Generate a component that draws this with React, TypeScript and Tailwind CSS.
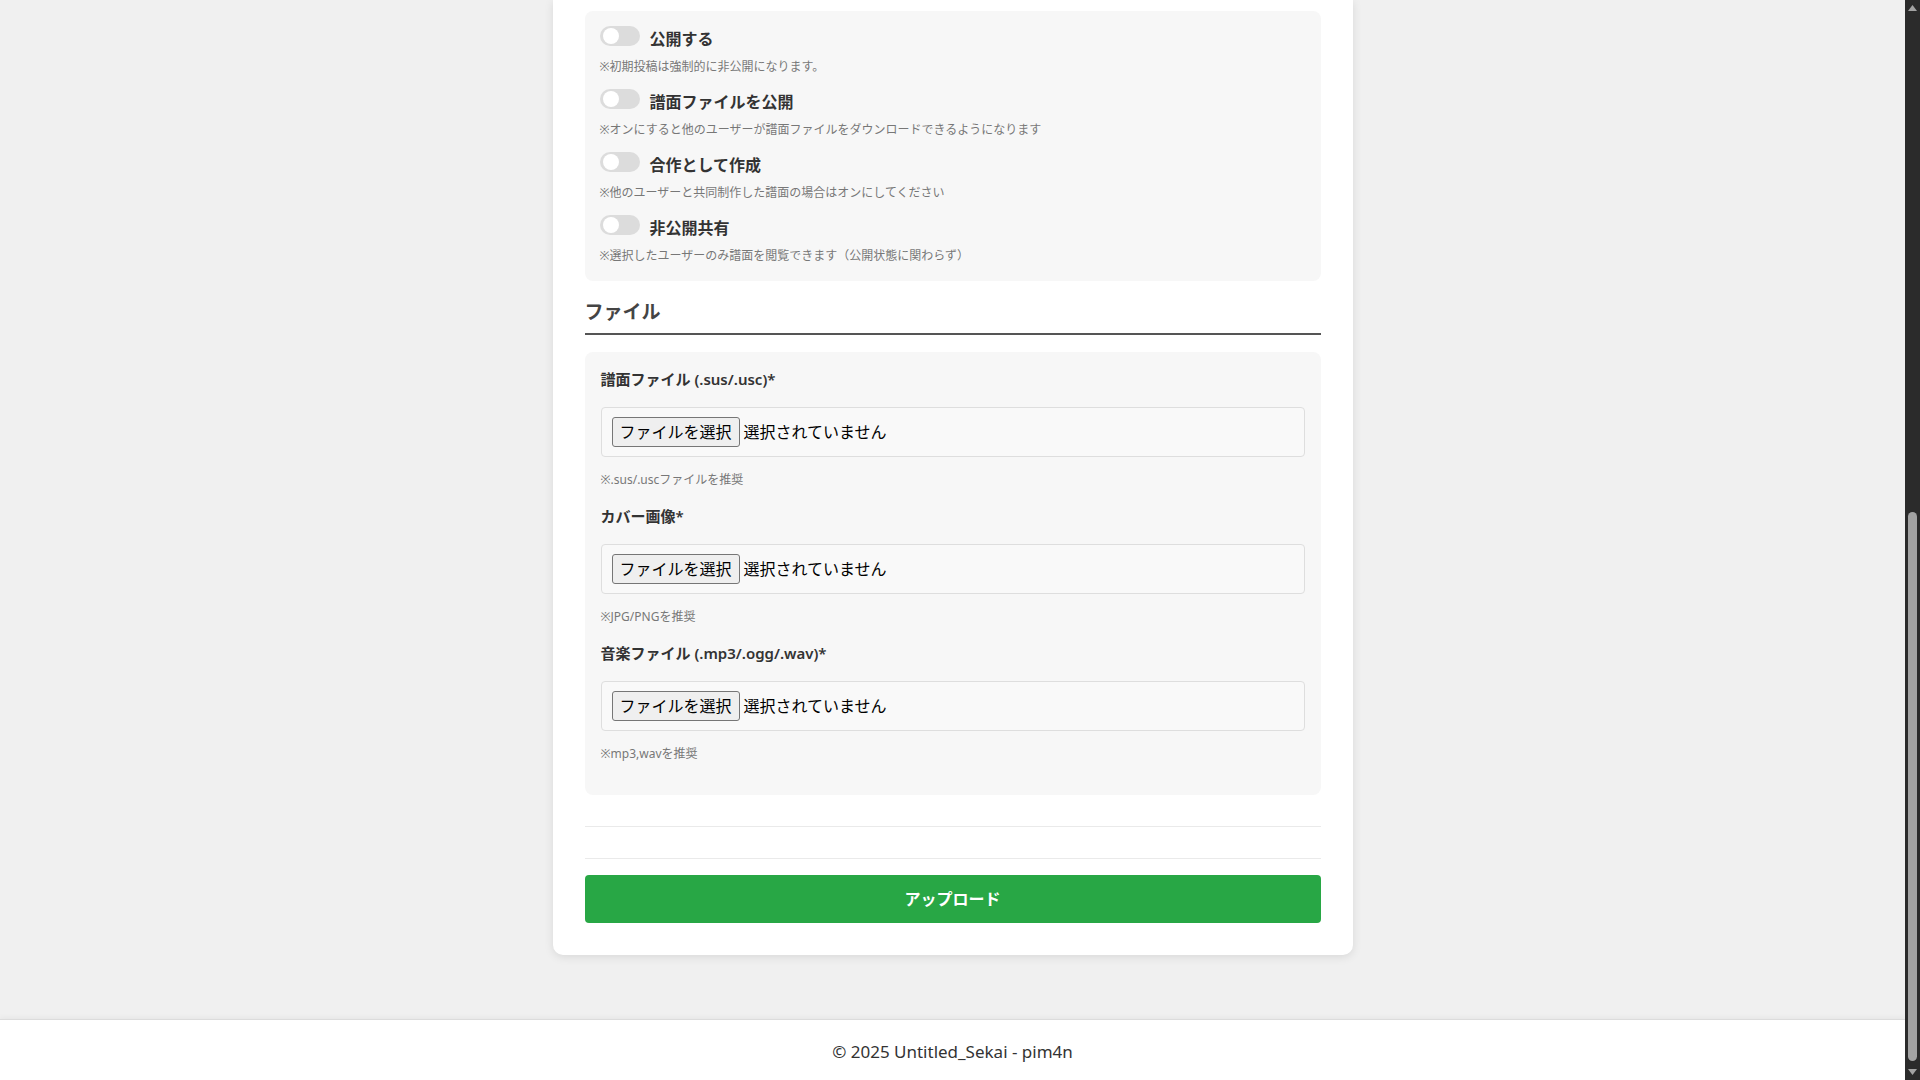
import React from "react";

const toggles = [
  { label: "公開する", note: "※初期投稿は強制的に非公開になります。" },
  { label: "譜面ファイルを公開", note: "※オンにすると他のユーザーが譜面ファイルをダウンロードできるようになります" },
  { label: "合作として作成", note: "※他のユーザーと共同制作した譜面の場合はオンにしてください" },
  { label: "非公開共有", note: "※選択したユーザーのみ譜面を閲覧できます（公開状態に関わらず）" },
];

const files = [
  { label: "譜面ファイル (.sus/.usc)*", hint: "※.sus/.uscファイルを推奨" },
  { label: "カバー画像*", hint: "※JPG/PNGを推奨" },
  { label: "音楽ファイル (.mp3/.ogg/.wav)*", hint: "※mp3,wavを推奨" },
];

function Toggle() {
  return (
    <span className="relative inline-block h-[20px] w-[40px] shrink-0 rounded-full bg-[#dcdcdc]">
      <span className="absolute left-[3px] top-[2px] h-[16px] w-[16px] rounded-full bg-white" />
    </span>
  );
}

function FileField({ label, hint }: { label: string; hint: string }) {
  return (
    <div>
      <div className="text-[15px] font-semibold leading-[24px] text-[#333]">{label}</div>
      <div className="mt-[16px] flex h-[50px] items-center rounded-[4px] border border-[#dedede] bg-[#f9f9f9] px-[10px]">
        <span className="flex h-[30px] items-center rounded-[3px] border border-[#767676] bg-[#efefef] px-[7px] text-[16px] text-black">
          ファイルを選択
        </span>
        <span className="ml-[4px] text-[16px] text-black">選択されていません</span>
      </div>
      <div className="mt-[14px] text-[12px] leading-[18px] text-[#777]">{hint}</div>
    </div>
  );
}

function Scrollbar() {
  return (
    <div className="flex h-screen w-[15px] shrink-0 flex-col items-center bg-[#2b2b2b]">
      <svg width="9" height="6" viewBox="0 0 9 6" className="mt-[5px]">
        <path d="M0 6 L4.5 0 L9 6 Z" fill="#a3a3a3" />
      </svg>
      <div className="mt-[501px] h-[549px] w-[9px] rounded-t-full rounded-b-full bg-[#a3a3a3]" />
      <svg width="9" height="6" viewBox="0 0 9 6" className="mt-[8px]">
        <path d="M0 0 L4.5 6 L9 0 Z" fill="#a3a3a3" />
      </svg>
    </div>
  );
}

export default function App() {
  return (
    <div
      className="flex h-screen w-full overflow-hidden bg-[#f0f0f0] text-[#333]"
      style={{ fontFamily: '"Noto Sans", "Noto Sans CJK JP", sans-serif' }}
    >
      <div className="flex min-w-0 flex-1 flex-col">
        <main className="flex-1">
          <div className="mx-auto w-[800px] rounded-b-[10px] bg-white px-8 pb-8 pt-[11px] shadow-[0_2px_10px_rgba(0,0,0,0.1)]">
            {/* Visibility options */}
            <div className="flex flex-col gap-[13px] rounded-[8px] bg-[#f7f7f7] px-[15px] pb-[16px] pt-[15px]">
              {toggles.map((t) => (
                <div key={t.label}>
                  <div className="flex items-start gap-[10px]">
                    <Toggle />
                    <span className="pt-[2px] text-[16px] font-semibold leading-[22px] text-[#333]">{t.label}</span>
                  </div>
                  <div className="mt-[8px] text-[12px] leading-[18px] text-[#777]">{t.note}</div>
                </div>
              ))}
            </div>

            {/* Files */}
            <h2 className="mt-[17px] border-b-2 border-[#555] pb-[7px] text-[19px] font-bold leading-[28px] text-[#444]">
              ファイル
            </h2>
            <div className="mt-[17px] flex flex-col gap-[15px] rounded-[8px] bg-[#f7f7f7] px-4 pb-[32px] pt-[15px]">
              {files.map((f) => (
                <FileField key={f.label} label={f.label} hint={f.hint} />
              ))}
            </div>

            <div className="mt-[31px] border-t border-[#eaeaea]" />
            <div className="mt-[31px] border-t border-[#eaeaea] pt-[16px]">
              <button className="flex h-[48px] w-full items-center justify-center rounded-[4px] bg-[#28a745] text-[16px] font-bold text-white">
                アップロード
              </button>
            </div>
          </div>
        </main>

        <footer className="border-t border-[#dcdcdc] bg-white pb-[16px] pt-[20px] text-center text-[17px] leading-[24px] text-[#333] shadow-[0_-2px_5px_rgba(0,0,0,0.04)]">
          © 2025 Untitled_Sekai - pim4n
        </footer>
      </div>
      <Scrollbar />
    </div>
  );
}
